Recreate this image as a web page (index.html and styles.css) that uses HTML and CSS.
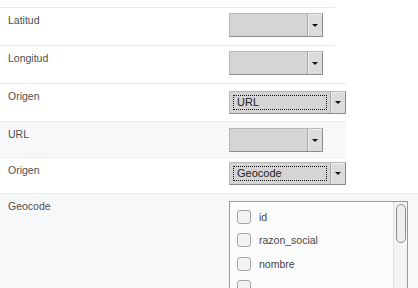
FILE: index.html
```html
<!DOCTYPE html>
<html>
<head>
<meta charset="utf-8">
<link rel="stylesheet" href="styles.css">
</head>
<body>
<div class="page">
  <div class="group group-a">
    <div class="row">
      <div class="label">Latitud</div>
      <div class="control">
        <div class="select small"><span class="value"></span><span class="btn"><i class="arrow"></i></span></div>
      </div>
    </div>
    <div class="row">
      <div class="label">Longitud</div>
      <div class="control">
        <div class="select small"><span class="value"></span><span class="btn"><i class="arrow"></i></span></div>
      </div>
    </div>
  </div>
  <div class="group group-b">
    <div class="row">
      <div class="label">Origen</div>
      <div class="control">
        <div class="select wide"><span class="value"><span class="focus">URL</span></span><span class="btn"><i class="arrow"></i></span></div>
      </div>
    </div>
    <div class="row alt short url-row">
      <div class="label">URL</div>
      <div class="control">
        <div class="select small"><span class="value"></span><span class="btn"><i class="arrow"></i></span></div>
      </div>
    </div>
    <div class="row short origin-row">
      <div class="label">Origen</div>
      <div class="control">
        <div class="select wide"><span class="value"><span class="focus">Geocode</span></span><span class="btn"><i class="arrow"></i></span></div>
      </div>
    </div>
  </div>
  <div class="group group-c">
    <div class="row alt">
      <div class="label">Geocode</div>
      <div class="control">
        <div class="listbox">
          <div class="items">
            <label class="item"><span class="check"></span>id</label>
            <label class="item"><span class="check"></span>razon_social</label>
            <label class="item"><span class="check"></span>nombre</label>
            <label class="item"><span class="check"></span></label>
          </div>
          <div class="scrollbar"><div class="thumb"></div></div>
        </div>
      </div>
    </div>
  </div>
</div>
</body>
</html>
```

FILE: styles.css
```css
html, body {
  margin: 0;
  padding: 0;
  background: #ffffff;
  overflow: hidden;
}
body {
  font-family: "Liberation Sans", Arial, sans-serif;
  font-size: 10.5px;
  color: #4d4d4d;
}
.page {
  padding-top: 7px;
}
.group-a { width: 335px; }
.group-b { width: 346px; }
.group-c { width: 418px; }

.row {
  display: flex;
  border-top: 1px solid #e9ecef;
  height: 38px;
  box-sizing: border-box;
}
.row.short { height: 36px; }
.row.alt { background: #f7f8fa; }
.group-c .row { height: 120px; }

.label {
  width: 229px;
  flex: none;
  box-sizing: border-box;
  padding: 6px 0 0 8px;
  line-height: 13px;
}
.control {
  padding-top: 5px;
}
.url-row .control { padding-top: 6px; }
.origin-row .control { padding-top: 2px; }

.select {
  display: flex;
  box-sizing: border-box;
  height: 24px;
  background: #d5d5d5;
  border: 1px solid;
  border-color: #b9b9b9 #8a8a8a #8a8a8a #b9b9b9;
}
.select.small { width: 94px; }
.select.wide { width: 117px; height: 23px; margin-top: 2px; }
.value {
  flex: 1;
  display: flex;
  align-items: center;
  padding: 0 3px;
}
.focus {
  flex: 1;
  border: 1px dotted #111;
  height: 13px;
  line-height: 13px;
  padding-left: 3px;
  font-size: 11px;
  color: #222;
}
.btn {
  width: 14px;
  flex: none;
  border-left: 1px solid #a8a8a8;
  box-shadow: inset 1px 1px 0 #eeeeee;
  background: #dcdcdc;
  display: flex;
  align-items: center;
  justify-content: center;
}
.arrow {
  width: 0;
  height: 0;
  border-left: 3px solid transparent;
  border-right: 3px solid transparent;
  border-top: 3px solid #111;
}

.listbox {
  margin-top: 2px;
  width: 179px;
  height: 100px;
  box-sizing: border-box;
  border: 1px solid #8c9cad;
  background: #fcfcfc;
  display: flex;
}
.items {
  flex: 1;
  padding: 3px 0 0 7px;
}
.item {
  display: flex;
  align-items: center;
  height: 23.5px;
  color: #444;
}
.check {
  width: 14px;
  height: 14px;
  box-sizing: border-box;
  border: 1px solid #a4a4a4;
  border-radius: 3px;
  background: #f3f3f3;
  margin-right: 8px;
}
.scrollbar {
  width: 14px;
  flex: none;
  border-left: 1px solid #e2e2e2;
  background: #f4f4f4;
  padding: 2px 1px 0 2px;
  box-sizing: border-box;
}
.thumb {
  width: 10px;
  height: 39px;
  box-sizing: border-box;
  border: 1px solid #8e8e8e;
  border-radius: 5px;
  background: #efefef;
}
```
